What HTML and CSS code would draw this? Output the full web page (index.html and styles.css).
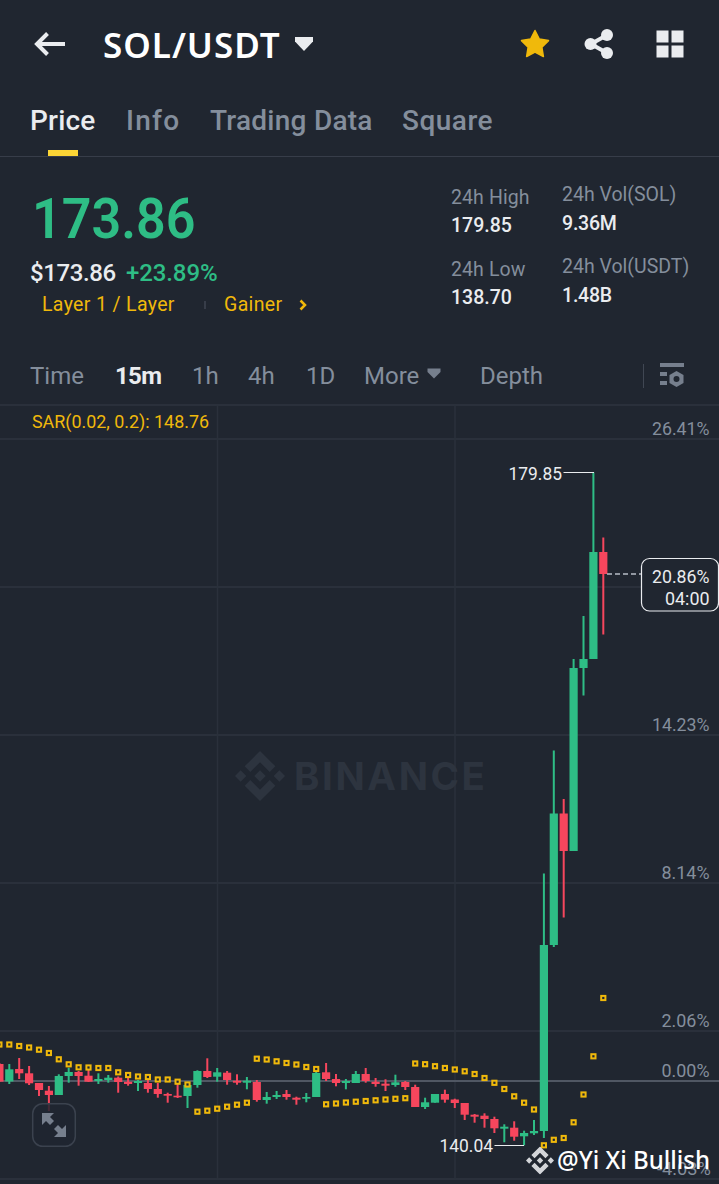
FILE: index.html
```
<!DOCTYPE html>
<html lang="en">
<head>
    <meta charset="UTF-8">
    <meta name="viewport" content="width=device-width, initial-scale=1.0">
    <link rel="stylesheet" href="styles.css">
    <title>SOL/USDT</title>
</head>
<body>
    <div class="app">
        <header class="header">
            <svg class="back" width="32" height="26" viewBox="0 0 32 26">
                <path d="M13.5 2.5L3 13l10.500 10.500M3 13h28" />
            </svg>
            <h1 class="pair">SOL/USDT</h1>
            <svg class="pair-caret" width="20" height="16" viewBox="0 0 20 16">
                <path d="M1 1h18v4.500L10 15 1 5.500z" />
            </svg>
            <div class="actions">
                <svg class="star" width="32" height="32" viewBox="0 0 32 32">
                    <path d="M16 2.500l4.300 8.600 9.200 1.500-6.600 6.700 1.500 9.200L16 24.200l-8.400 4.300 1.500-9.200-6.600-6.700 9.200-1.500z" />
                </svg>
                <svg class="share" width="32" height="32" viewBox="0 0 32 32">
                    <path d="M24 7L8 16l16 9" />
                    <circle cx="24" cy="7" r="6" />
                    <circle cx="7.500" cy="16" r="6" />
                    <circle cx="24" cy="25" r="6" />
                </svg>
                <svg class="apps" width="28" height="28" viewBox="0 0 28 28">
                    <path d="M.5.5h12v12H.5zM15.500.5h12v12h-12zM.5 15.500h12v12H.5zM15.500 15.500h12v12h-12z" />
                </svg>
            </div>
        </header>

        <nav class="tabs">
            <span class="tab active">Price</span>
            <span class="tab info">Info</span>
            <span class="tab data">Trading Data</span>
            <span class="tab">Square</span>
        </nav>

        <section class="summary">
            <div class="quote">
                <div class="last-price">173.86</div>
                <div class="fiat">
                    <span class="usd">$173.86</span>
                    <span class="change">+23.89%</span>
                </div>
                <div class="tags">
                    <span class="tag">Layer 1 / Layer</span>
                    <i class="tag-divider"></i>
                    <span class="tag gainer">Gainer</span>
                    <svg width="8" height="12" viewBox="0 0 8 12"><path d="M1.500 1.500L6 6l-4.500 4.500" /></svg>
                </div>
            </div>
            <dl class="stats">
                <dt>24h High</dt>
                <dd>179.85</dd>
                <dt>24h Low</dt>
                <dd>138.70</dd>
            </dl>
            <dl class="stats volume">
                <dt>24h Vol(SOL)</dt>
                <dd>9.36M</dd>
                <dt>24h Vol(USDT)</dt>
                <dd>1.48B</dd>
            </dl>
        </section>

        <nav class="intervals">
            <span>Time</span>
            <span class="active">15m</span>
            <span>1h</span>
            <span>4h</span>
            <span>1D</span>
            <span>More</span>
            <svg class="more-caret" width="14" height="11" viewBox="0 0 14 11"><path d="M.5.5h13V4L7 10.500.5 4z" /></svg>
            <span>Depth</span>
            <i class="interval-divider"></i>
            <svg class="settings" width="24" height="24" viewBox="0 0 24 24">
                <path fill-rule="evenodd" d="M0 0h24v4H0zM0 9h7v4H0zM0 18h7v4H0zM16.500 8l7 4v8l-7 4-7-4v-8zM16.500 13a3 3 0 1 0 0 6 3 3 0 0 0 0-6z" />
            </svg>
        </nav>

        <svg class="chart" width="719" height="780" viewBox="0 404 719 780">
            <defs>
                <symbol id="logo" viewBox="0 0 126.610 126.610">
                    <path d="M38.730 53.200l24.590-24.580 24.600 24.600 14.300-14.310L63.320 0 24.430 38.900zM0 63.310l14.300-14.310 14.310 14.310-14.310 14.300zM38.730 73.410l24.590 24.590 24.600-24.600 14.310 14.290-38.910 38.920-38.910-38.900zM98 63.310l14.300-14.310 14.310 14.310-14.310 14.300zM77.830 63.300L63.320 48.780 48.810 63.290l14.510 14.500z" />
                </symbol>
            </defs>
            <g id="grid"></g>
            <g class="watermark">
                <use href="#logo" x="235" y="751" width="50" height="50" />
                <text x="294" y="790" textLength="191">BINANCE</text>
            </g>
            <path class="zero-line" d="M0 1081h719" />
            <g id="axis" class="axis"></g>
            <g id="candles"></g>
            <g id="sar" class="sar"></g>

            <text class="sar-label" x="32" y="428" textLength="177" lengthAdjust="spacingAndGlyphs">SAR(0.02, 0.2): 148.76</text>
            <g class="marker">
                <text x="508.500" y="480" textLength="53.500" lengthAdjust="spacingAndGlyphs">179.85</text>
                <path d="M563.500 472.500h30.500" />
                <text x="439.500" y="1152" textLength="53.500" lengthAdjust="spacingAndGlyphs">140.04</text>
                <path d="M494.500 1145.500h29.500" />
            </g>

            <path class="price-line" d="M607 574h34" />
            <rect class="price-box" x="641.500" y="558.500" width="77" height="52.500" rx="8" />
            <text class="price-text" x="652" y="583" textLength="57.500" lengthAdjust="spacingAndGlyphs">20.86%</text>
            <text class="price-text" x="665" y="605" textLength="44.500" lengthAdjust="spacingAndGlyphs">04:00</text>

            <g class="expand">
                <rect x="32.700" y="1103.700" width="42.600" height="42.600" rx="10" />
                <path d="M42 1113h12l-4 4 4 4-4 4-4-4-4 4zM66 1137h-12l4-4-4-4 4-4 4 4 4-4z" />
            </g>

            <g class="author">
                <use href="#logo" x="526" y="1146.500" width="28" height="28" />
                <text x="557" y="1169" textLength="153" lengthAdjust="spacingAndGlyphs">@Yi Xi Bullish</text>
            </g>
        </svg>
    </div>
    <script src="chart.js"></script>
</body>
</html>
```
FILE: styles.css
```
body {
    margin: 0;
    background-color: #202630;
    color: #eaecef;
    font-family: Roboto, "Liberation Sans", sans-serif;
    overflow: hidden;
}

.app {
    width: 719px;
    height: 1184px;
}

.header {
    display: flex;
    align-items: center;
    height: 88px;
    padding: 0 35px 0 34px;
}

.back {
    fill: none;
    stroke: #eaecef;
    stroke-width: 4;
}

.pair {
    width: 190px;
    margin: 2px 0 0 37px;
    font-family: "Noto Sans", sans-serif;
    font-size: 35px;
    font-weight: 600;
    line-height: 48px;
    letter-spacing: 1px;
    color: #fff;
}

.pair-caret {
    fill: #eaecef;
    margin-left: 1px;
}

.actions {
    display: flex;
    align-items: center;
    margin-left: auto;
}

.star {
    fill: #f0b90b;
    stroke: #f0b90b;
    stroke-width: 1.5;
    stroke-linejoin: round;
}

.share {
    margin: 0 41px 0 32px;
    fill: #eaecef;
}

.share path {
    fill: none;
    stroke: #eaecef;
    stroke-width: 4;
}

.apps {
    fill: #eaecef;
}

.tabs {
    display: grid;
    grid-template-columns: 96px 84px 192px auto;
    height: 68px;
    padding-left: 30px;
    border-bottom: 1px solid #373d49;
    font-size: 28px;
    font-weight: 500;
    line-height: 66px;
    letter-spacing: 0.5px;
    color: #848e9c;
}

.tab {
    position: relative;
}

.tab.active {
    letter-spacing: 0.2px;
    color: #eaecef;
}

.tab.info {
    letter-spacing: 1.3px;
}

.tab.data {
    letter-spacing: 0.25px;
}

.tab.active::after {
    content: "";
    position: absolute;
    left: 18px;
    bottom: 0;
    width: 30px;
    height: 6px;
    background-color: #fcd535;
}

.summary {
    display: grid;
    grid-template-columns: 421px 111px auto;
    height: 188px;
    padding-left: 30px;
}

.quote {
    padding-top: 30px;
}

.last-price {
    margin-left: 2px;
    font-size: 56px;
    font-weight: 600;
    line-height: 64px;
    color: #2ebd85;
    transform: scaleX(0.93);
    transform-origin: left;
}

.fiat {
    display: grid;
    grid-template-columns: 96px auto;
    font-size: 24px;
    font-weight: 500;
    line-height: 44px;
    letter-spacing: -0.4px;
}

.change {
    letter-spacing: -0.1px;
    color: #2ebd85;
}

.tags {
    display: flex;
    align-items: center;
    padding-left: 12px;
    font-size: 19.5px;
    line-height: 20px;
    letter-spacing: 0.35px;
    color: #f0b90b;
}

.tag {
    width: 162px;
    white-space: nowrap;
}

.tag-divider {
    width: 2px;
    height: 8px;
    background-color: #373d49;
}

.tag.gainer {
    width: 75px;
    margin-left: 18px;
}

.tags svg {
    fill: none;
    stroke: #f0b90b;
    stroke-width: 2.5;
}

.stats {
    margin: 0;
    padding-top: 27px;
    font-size: 19.5px;
    line-height: 28px;
}

.stats dt {
    letter-spacing: 0.1px;
    color: #848e9c;
}

.stats dd {
    margin: 0 0 16px;
    font-weight: 500;
}

.stats.volume {
    padding-top: 24px;
    line-height: 28.5px;
}

.stats.volume dt {
    letter-spacing: 0;
}

.stats.volume dd {
    letter-spacing: -0.2px;
    margin-bottom: 15px;
}

.intervals {
    display: grid;
    grid-template-columns: 85px 77px 56px 58px 58px 63px 53px 163px 17px auto;
    align-items: center;
    height: 56px;
    padding: 3px 0 0 30px;
    font-size: 24px;
    color: #848e9c;
}

.intervals .active {
    font-weight: 700;
    letter-spacing: -0.7px;
    color: #eaecef;
}

.intervals svg {
    fill: #767f8d;
}

.more-caret {
    margin-bottom: 5px;
}

.settings {
    margin-bottom: 2px;
}

.interval-divider {
    width: 1px;
    height: 24px;
    background-color: #404753;
}

.chart {
    display: block;
    font-size: 18px;
}

.grid-line {
    stroke: #2a303b;
    stroke-width: 2;
}

.grid-line.vertical {
    stroke-width: 1.5;
}

.zero-line {
    stroke: #505763;
    stroke-width: 2;
}

.watermark {
    fill: #2d343f;
    font-family: Inter, sans-serif;
    font-size: 38.5px;
    font-weight: 700;
}

.axis {
    fill: #848e9c;
}

.up {
    fill: #2ebd85;
}

.down {
    fill: #f6465d;
}

.sar rect {
    fill: #202630;
    stroke: #f0b90b;
    stroke-width: 2;
}

.sar-label {
    fill: #f0b90b;
}

.marker {
    fill: #eaecef;
}

.marker path {
    stroke: #eaecef;
}

.price-line {
    stroke: #b7bdc6;
    stroke-width: 1.3;
    stroke-dasharray: 5 3;
}

.price-box {
    fill: #202630;
    stroke: #eaecef;
    stroke-width: 1.2;
}

.price-text {
    fill: #eaecef;
}

.expand rect {
    fill: #202630;
    fill-opacity: 0.85;
    stroke: #3b424e;
    stroke-width: 1.5;
}

.expand path {
    fill: #767f8d;
}

.author {
    fill: #fff;
    font-family: "Noto Sans", sans-serif;
    font-size: 25px;
    font-weight: 500;
}

.author use {
    fill: #d3d5d9;
}
```
FILE: chart.js
```
const SVG_NS = 'http://www.w3.org/2000/svg';
const STEP = 9.9;
const FIRST_X = -0.6;

// [direction, high, body top, body bottom, low]
const candles = [
    ['down', 1063, 1064, 1081.7, 1082],
    ['up', 1064, 1069.3, 1081.5, 1084],
    ['down', 1058, 1069, 1073.3, 1079],
    ['down', 1066, 1073.3, 1083.3, 1085],
    ['down', 1083, 1083, 1090, 1096],
    ['down', 1086, 1090.7, 1095, 1111],
    ['up', 1074.3, 1076, 1095, 1095],
    ['up', 1067.7, 1072, 1076, 1082.7],
    ['down', 1071, 1072, 1076, 1085.7],
    ['down', 1070, 1075.7, 1081.7, 1082],
    ['up', 1073.3, 1079, 1081, 1084],
    ['up', 1075, 1077.7, 1080, 1082.7],
    ['down', 1076.5, 1077.7, 1082, 1092.7],
    ['down', 1078, 1081.7, 1084, 1085.7],
    ['up', 1080, 1081, 1083, 1091],
    ['down', 1075, 1083, 1089, 1092.7],
    ['down', 1083, 1089, 1094, 1097.7],
    ['down', 1092.7, 1094, 1095.7, 1102.7],
    ['down', 1083, 1095.7, 1097.3, 1098],
    ['up', 1085, 1085, 1096, 1108],
    ['up', 1070.3, 1071, 1085, 1087.7],
    ['down', 1058.3, 1071, 1077, 1078],
    ['up', 1068, 1072.3, 1076.7, 1081.7],
    ['down', 1071, 1072.7, 1080, 1084.7],
    ['down', 1074.3, 1080.7, 1082.7, 1084.7],
    ['up', 1077, 1080.7, 1082.7, 1089.3],
    ['down', 1080, 1082, 1100, 1101.7],
    ['up', 1092, 1097, 1100, 1103.7],
    ['up', 1091, 1095, 1097, 1099],
    ['down', 1090, 1094, 1097, 1099.7],
    ['down', 1096.7, 1097.7, 1099.7, 1104.7],
    ['up', 1093, 1097, 1098.7, 1102.3],
    ['up', 1071.5, 1073, 1097, 1097],
    ['down', 1063, 1072.3, 1079, 1081],
    ['down', 1074, 1079, 1083, 1086.3],
    ['up', 1079, 1081, 1083, 1089.3],
    ['up', 1071, 1074, 1083, 1083],
    ['down', 1068, 1074, 1081, 1082.7],
    ['down', 1078, 1081.7, 1084, 1086.7],
    ['down', 1079.3, 1083.7, 1085.7, 1091],
    ['up', 1074.7, 1082.3, 1085, 1086.7],
    ['down', 1081, 1082, 1087, 1090],
    ['down', 1084.7, 1087, 1107, 1107],
    ['up', 1097.7, 1102.3, 1107, 1109],
    ['up', 1094, 1094, 1102.7, 1102.7],
    ['down', 1089.7, 1094, 1099.7, 1102.7],
    ['down', 1098.7, 1099.5, 1103, 1108],
    ['down', 1103, 1103, 1114.7, 1120],
    ['down', 1114, 1114.7, 1116.7, 1122.7],
    ['down', 1113.3, 1115.7, 1119, 1127.7],
    ['down', 1116.7, 1119, 1128.3, 1133],
    ['up', 1124.3, 1126.7, 1128.7, 1142.3],
    ['down', 1121.3, 1127.7, 1136.7, 1140.7],
    ['up', 1130.7, 1133, 1136.3, 1145.3],
    ['up', 1120, 1131, 1133.3, 1135],
    ['up', 873.5, 945, 1131, 1138],
    ['up', 750.5, 813.5, 945, 947],
    ['down', 799, 813.5, 851, 917.5],
    ['up', 659, 668, 851, 851],
    ['up', 616, 659, 668, 695.5],
    ['up', 472.5, 552, 659, 659],
    ['down', 537.5, 552, 574, 634.5]
];

// Parabolic SAR points, one per candle
const sar = [
    1044.5, 1044.5, 1046, 1047.5, 1049.7, 1053, 1059.3, 1064.3, 1067.3, 1067.5,
    1068, 1068, 1072.3, 1075, 1076.5, 1077, 1079.5, 1079.5, 1081.7, 1084.5,
    1111.7, 1110.7, 1108.7, 1106.7, 1104.7, 1102.7, 1058.7, 1059.5, 1061.3, 1063,
    1064.5, 1067, 1069, 1104.3, 1103.5, 1102.5, 1101.7, 1101, 1100.3, 1099.5,
    1098.8, 1098.2, 1063.5, 1064.2, 1066.2, 1068, 1069.5, 1071.3, 1074, 1078,
    1082.8, 1089, 1096.3, 1102.7, 1109.5, 1145.3, 1139.8, 1138, 1122.3, 1094.5,
    1056.3, 998
];

const axisLabels = [
    ['26.41%', 435], ['14.23%', 731], ['8.14%', 879],
    ['2.06%', 1027], ['0.00%', 1077], ['-4.03%', 1175]
];

function add(parentId, name, attrs) {
    const element = document.createElementNS(SVG_NS, name);
    Object.keys(attrs).forEach(key => element.setAttribute(key, attrs[key]));
    document.getElementById(parentId).appendChild(element);
    return element;
}

// grid
[405, 439, 587, 735, 883, 1031, 1179].forEach(y => {
    add('grid', 'path', { class: 'grid-line', d: `M0 ${y}H719` });
});
[217.5, 455].forEach(x => {
    add('grid', 'path', { class: 'grid-line vertical', d: `M${x} 405V1179` });
});

axisLabels.forEach(([label, y]) => {
    const width = label[0] === '-' ? 54 : label.length === 6 ? 57.5 : 48;
    const right = label[0] === '-' ? 711 : 709.5;
    add('axis', 'text', {
        x: right - width, y, textLength: width, lengthAdjust: 'spacingAndGlyphs'
    }).textContent = label;
});

candles.forEach(([direction, high, top, bottom, low], i) => {
    const x = FIRST_X + i * STEP;
    add('candles', 'rect', { class: direction, x: x - 1, y: high, width: 2, height: low - high });
    add('candles', 'rect', { class: direction, x: x - 4.1, y: top, width: 8.2, height: bottom - top });
});

sar.forEach((y, i) => {
    add('sar', 'rect', { x: FIRST_X + i * STEP - 2.1, y: y - 2.1, width: 4.2, height: 4.2 });
});
```
